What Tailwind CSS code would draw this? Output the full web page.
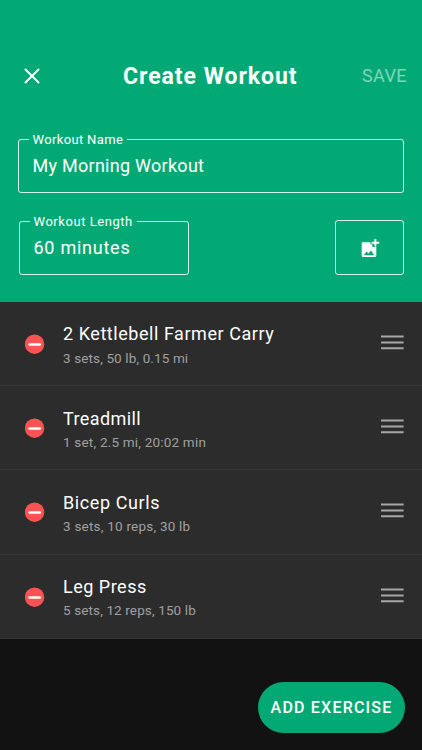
<!DOCTYPE html>
<html lang="en">
<head>
<meta charset="utf-8">
<meta name="viewport" content="width=device-width, initial-scale=1">
<title>Create Workout</title>
<script src="https://cdn.jsdelivr.net/npm/@tailwindcss/browser@4"></script>
</head>
<body class="bg-[#121212]">
<svg class="hidden">
  <symbol id="minus" viewBox="0 0 20 20"><circle cx="9.6" cy="10.2" r="9.7" fill="#ff5252"/><path d="M4.4 10.5H15" stroke="#fff" stroke-width="2.3" stroke-linecap="round"/></symbol>
  <symbol id="drag" viewBox="0 0 24 16"><path d="M1 2.6H23.6M1 8.4H23.6M1 14.2H23.6" stroke="#a6a6a6" stroke-width="2"/></symbol>
</svg>
<div class="flex h-[750px] w-[422px] flex-col overflow-hidden font-['Roboto',sans-serif] text-white">
  <header class="h-[302px] shrink-0 bg-[#03a974] pt-[60px]">
    <div class="grid h-8 grid-cols-[99px_auto_1fr] items-start pr-[15px] pl-6">
      <svg class="mt-[7.5px] size-4" viewBox="0 0 16 16" fill="none" stroke="#fff" stroke-width="1.9"><path d="M1 1L15 15M15 1L1 15"/></svg>
      <h1 class="pt-px text-[23px] leading-8 font-bold tracking-[0.97px] whitespace-nowrap">Create Workout</h1>
      <span class="justify-self-end text-[18px] leading-8 tracking-[0.4px] text-white/50">SAVE</span>
    </div>
    <fieldset class="mt-[39px] ml-[18px] h-[62px] w-[386px] rounded-[3px] border-[1.4px] border-[#d5f2e9] pl-[10px]">
      <legend class="pr-1 pl-[3.5px] text-[13px] leading-4 tracking-[0.35px]"><span class="relative top-px">Workout Name</span></legend>
      <p class="pl-[3.5px] pt-[7px] text-[18px] leading-6 tracking-[0.27px]">My Morning Workout</p>
    </fieldset>
    <div class="mt-5 flex items-end justify-between pr-[18px] pl-[19px]">
      <fieldset class="h-[62px] w-[170px] rounded-[3px] border-[1.4px] border-[#d5f2e9] pl-[10px]">
        <legend class="pr-1 pl-[3.5px] text-[13px] leading-4 tracking-[0.55px]"><span class="relative top-px">Workout Length</span></legend>
        <p class="pl-[3.5px] pt-[7px] text-[18px] leading-6 tracking-[0.75px]">60 minutes</p>
      </fieldset>
      <button class="flex h-[55px] w-[69px] items-center justify-center rounded-[3px] border border-[#d5f2e9]" aria-label="Add photo">
        <svg class="size-5" viewBox="0 0 20 20"><path fill="#fff" d="M3 4.2H10.4V6.2H12.4V9H16.3V17.8Q16.3 19 15.1 19H3Q1.7 19 1.7 17.8V5.5Q1.7 4.2 3 4.2Z"/><path fill="#03a974" d="M3.7 17.2L6.6 13.4L8.4 15.4L11 12.6L14.2 17.2Z"/><path d="M15.4 .9V8.5M11.6 4.7H19.2" stroke="#fff" stroke-width="1.9"/></svg>
      </button>
    </div>
  </header>
  <ul class="shrink-0 bg-[#2c2c2c]">
    <li class="flex h-[84.2px] border-b border-[#373737] pr-[18px] pl-[25px]">
      <svg class="mt-8 size-5"><use href="#minus"/></svg>
      <div class="ml-[18px] grow pt-5"><p class="text-[18px] leading-6 tracking-[0.55px]">2 Kettlebell Farmer Carry</p><p class="text-[13.5px] leading-6 tracking-[0.12px] text-[#a0a0a0]">3 sets, 50 lb, 0.15 mi</p></div>
      <svg class="mt-8 h-4 w-6"><use href="#drag"/></svg>
    </li>
    <li class="flex h-[84.2px] border-b border-[#373737] pr-[18px] pl-[25px]">
      <svg class="mt-8 size-5"><use href="#minus"/></svg>
      <div class="ml-[18px] grow pt-[20.5px]"><p class="text-[18px] leading-6 tracking-[0.4px]">Treadmill</p><p class="text-[13.5px] leading-[23px] tracking-[0.2px] text-[#a0a0a0]">1 set, 2.5 mi, 20:02 min</p></div>
      <svg class="mt-8 h-4 w-6"><use href="#drag"/></svg>
    </li>
    <li class="flex h-[84.2px] border-b border-[#373737] pr-[18px] pl-[25px]">
      <svg class="mt-8 size-5"><use href="#minus"/></svg>
      <div class="ml-[18px] grow pt-[20.5px]"><p class="text-[18px] leading-6 tracking-[0.6px]">Bicep Curls</p><p class="text-[13.5px] leading-[23px] tracking-[0.22px] text-[#a0a0a0]">3 sets, 10 reps, 30 lb</p></div>
      <svg class="mt-8 h-4 w-6"><use href="#drag"/></svg>
    </li>
    <li class="flex h-[84.2px] border-b border-[#373737] pr-[18px] pl-[25px]">
      <svg class="mt-8 size-5"><use href="#minus"/></svg>
      <div class="ml-[18px] grow pt-5"><p class="text-[18px] leading-6 tracking-[0.5px]">Leg Press</p><p class="text-[13.5px] leading-[23px] tracking-[0.12px] text-[#a0a0a0]">5 sets, 12 reps, 150 lb</p></div>
      <svg class="mt-8 h-4 w-6"><use href="#drag"/></svg>
    </li>
  </ul>
  <div class="flex grow items-end justify-end pr-[17px] pb-[17px]">
    <button class="h-[51px] w-[147px] rounded-full bg-[#03a974] text-[16px] font-medium tracking-[1.2px] whitespace-nowrap">ADD EXERCISE</button>
  </div>
</div>
</body>
</html>
